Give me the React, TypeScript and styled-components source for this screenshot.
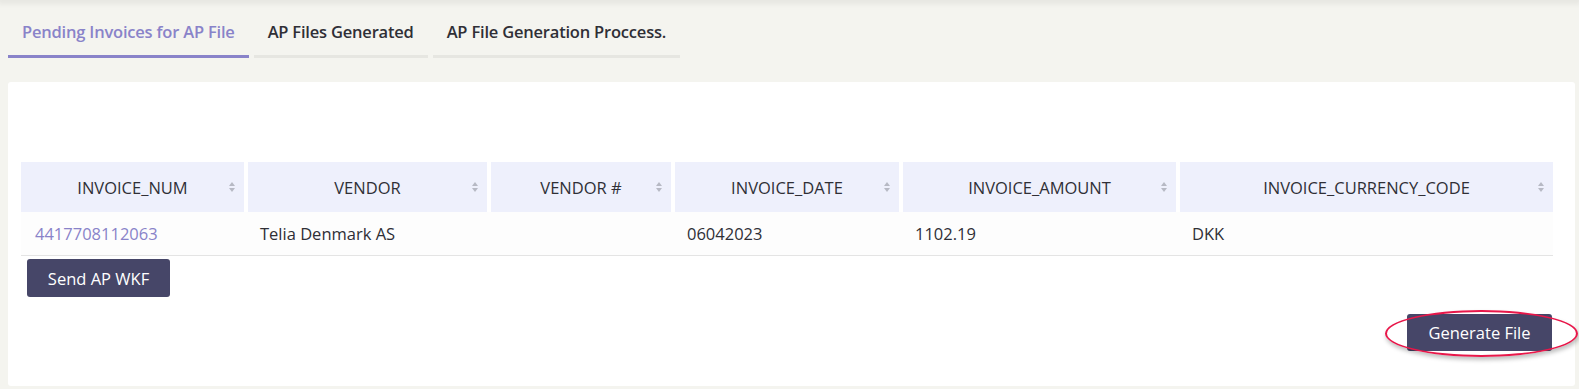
import styled, { createGlobalStyle } from 'styled-components'

const GlobalStyle = createGlobalStyle`
  html, body {
    overflow: hidden;
  }
  body {
    margin: 0;
    min-width: 1579px;
    background: #f4f4ef;
    font-family: 'Open Sans', 'Liberation Sans', sans-serif;
    color: #333;
  }
`

const tabs = ['Pending Invoices for AP File', 'AP Files Generated', 'AP File Generation Proccess.']

const columns = [
  { title: 'INVOICE_NUM', width: 225 },
  { title: 'VENDOR', width: 243 },
  { title: 'VENDOR #', width: 184 },
  { title: 'INVOICE_DATE', width: 228 },
  { title: 'INVOICE_AMOUNT', width: 277 },
  { title: 'INVOICE_CURRENCY_CODE', width: 375 },
]

const rows = [['4417708112063', 'Telia Denmark AS', '', '06042023', '1102.19', 'DKK']]

function SortIcon() {
  return (
    <svg width="8" height="12" viewBox="0 0 8 12">
      <path d="M4 1 L7 5 L1 5 Z" fill="#b7b9c4" />
      <path d="M4 11 L7 7 L1 7 Z" fill="#b7b9c4" />
    </svg>
  )
}

export default function App() {
  return (
    <>
      <GlobalStyle />
      <StyledTopShadow />
      <StyledTabs>
        {tabs.map((t, i) => (
          <StyledTab key={t} $active={i === 0}>
            {t}
          </StyledTab>
        ))}
      </StyledTabs>
      <StyledCard>
        <StyledTable>
          <colgroup>
            {columns.map((c) => (
              <col key={c.title} style={{ width: c.width }} />
            ))}
          </colgroup>
          <thead>
            <tr>
              {columns.map((c) => (
                <StyledTh key={c.title}>
                  {c.title}
                  <StyledSort>
                    <SortIcon />
                  </StyledSort>
                </StyledTh>
              ))}
            </tr>
          </thead>
          <tbody>
            {rows.map((r) => (
              <tr key={r[0]}>
                {r.map((v, i) => (
                  <StyledTd key={i}>{i === 0 ? <StyledLink href="#">{v}</StyledLink> : v}</StyledTd>
                ))}
              </tr>
            ))}
          </tbody>
        </StyledTable>
        <StyledSendButton>Send AP WKF</StyledSendButton>
        <StyledFooter>
          <StyledHighlight>
            <StyledButton>Generate File</StyledButton>
          </StyledHighlight>
        </StyledFooter>
      </StyledCard>
    </>
  )
}

const StyledTopShadow = styled.div`
  height: 0;
  box-shadow: 0 0 6px 3px rgba(0, 0, 0, 0.08);
`

const StyledTabs = styled.div`
  display: flex;
  gap: 5px;
  padding: 17px 0 0 8px;
`

const StyledTab = styled.div<{ $active?: boolean }>`
  padding: 0 14px;
  height: 38px;
  line-height: 30px;
  font-size: 16.5px;
  font-weight: 600;
  letter-spacing: -0.2px;
  color: ${(p) => (p.$active ? '#8983c9' : '#2f2f36')};
  border-bottom: 3px solid ${(p) => (p.$active ? '#8983c9' : '#e6e6e1')};
`

const StyledCard = styled.div`
  margin: 24px 0 0 8px;
  width: 1567px;
  height: 304px;
  box-sizing: border-box;
  padding: 80px 22px 0 13px;
  background: #fff;
  border-radius: 3px;
`

const StyledTable = styled.table`
  width: 1532px;
  border-collapse: collapse;
  table-layout: fixed;
`

const StyledTh = styled.th`
  position: relative;
  height: 50px;
  background: #eef0fc;
  border-left: 4px solid #fff;
  font-size: 16.5px;
  font-weight: 400;
  color: #2f2f36;
  text-align: center;
  padding: 0;

  &:first-child {
    border-left: none;
  }
`

const StyledSort = styled.span`
  position: absolute;
  right: 8px;
  top: 19px;
  display: flex;
`

const StyledTd = styled.td`
  height: 43px;
  padding: 0 14px;
  font-size: 16.5px;
  color: #2f2f36;
  background: #fdfdfd;
  border-bottom: 1px solid #e4e4e4;
`

const StyledLink = styled.a`
  color: #8983c9;
  text-decoration: none;
`

const StyledButtonBase = styled.button`
  background: #464668;
  color: #fff;
  border: none;
  border-radius: 3px;
  font-family: 'Open Sans', 'Liberation Sans', sans-serif;
  font-size: 16.5px;
  font-weight: 500;
  cursor: pointer;
`

const StyledSendButton = styled(StyledButtonBase)`
  margin: 3px 0 0 6px;
  width: 143px;
  height: 38px;
`

const StyledFooter = styled.div`
  display: flex;
  justify-content: flex-end;
  margin-top: 17px;
  width: 1532px;
`

const StyledHighlight = styled.div`
  position: relative;
  margin-right: 1px;

  &::after {
    content: '';
    position: absolute;
    left: -22px;
    right: -26px;
    top: -4px;
    bottom: -6px;
    border: 2px solid #e8174a;
    border-radius: 50%;
    box-shadow: 1px 3px 4px rgba(0, 0, 0, 0.25);
    pointer-events: none;
  }
`

const StyledButton = styled(StyledButtonBase)`
  width: 145px;
  height: 37px;
  display: block;
`
